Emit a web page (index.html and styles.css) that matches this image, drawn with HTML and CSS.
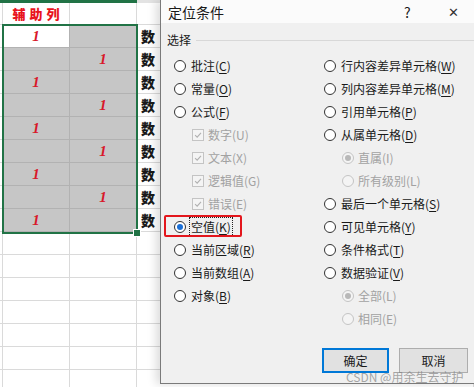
FILE: index.html
```html
<!DOCTYPE html>
<html lang="zh-CN">

<head>
  <meta charset="UTF-8">
  <title>定位条件</title>
  <link rel="stylesheet" href="styles.css">
</head>

<body>
  <div class="screen">
    <div class="colbar"><span class="colbar-sel"></span></div>

    <div class="sheet">
      <div class="c"></div><div class="c head">辅助列</div><div class="c"></div><div class="c"></div>

      <div class="c"></div><div class="c active"><i class="one">1</i></div><div class="c sel"></div><div class="c txt">数</div>
      <div class="c"></div><div class="c sel"></div><div class="c sel"><i class="one">1</i></div><div class="c txt">数</div>
      <div class="c"></div><div class="c sel"><i class="one">1</i></div><div class="c sel"></div><div class="c txt">数</div>
      <div class="c"></div><div class="c sel"></div><div class="c sel"><i class="one">1</i></div><div class="c txt">数</div>
      <div class="c"></div><div class="c sel"><i class="one">1</i></div><div class="c sel"></div><div class="c txt">数</div>
      <div class="c"></div><div class="c sel"></div><div class="c sel"><i class="one">1</i></div><div class="c txt">数</div>
      <div class="c"></div><div class="c sel"><i class="one">1</i></div><div class="c sel"></div><div class="c txt">数</div>
      <div class="c"></div><div class="c sel"></div><div class="c sel"><i class="one">1</i></div><div class="c txt">数</div>
      <div class="c"></div><div class="c sel"><i class="one">1</i></div><div class="c sel"></div><div class="c txt">数</div>

      <div class="c"></div><div class="c"></div><div class="c"></div><div class="c"></div>
      <div class="c"></div><div class="c"></div><div class="c"></div><div class="c"></div>
      <div class="c"></div><div class="c"></div><div class="c"></div><div class="c"></div>
      <div class="c"></div><div class="c"></div><div class="c"></div><div class="c"></div>
      <div class="c"></div><div class="c"></div><div class="c"></div><div class="c"></div>
      <div class="c"></div><div class="c"></div><div class="c"></div><div class="c"></div>
      <div class="c"></div><div class="c"></div><div class="c"></div><div class="c"></div>
    </div>

    <!-- selection frame over cells A2:B10 -->
    <div class="selection"><span class="handle"></span></div>

    <div class="dialog">
      <div class="titlebar">
        <span class="title">定位条件</span>
        <span class="help">?</span>
        <span class="close">✕</span>
      </div>

      <div class="group">
        <div class="legend"><span>选择</span></div>

        <div class="options">
          <label class="opt"><span class="radio"></span><span>批注(<u>C</u>)</span></label>
          <label class="opt"><span class="radio"></span><span>行内容差异单元格(<u>W</u>)</span></label>

          <label class="opt"><span class="radio"></span><span>常量(<u>O</u>)</span></label>
          <label class="opt"><span class="radio"></span><span>列内容差异单元格(<u>M</u>)</span></label>

          <label class="opt"><span class="radio"></span><span>公式(<u>F</u>)</span></label>
          <label class="opt"><span class="radio"></span><span>引用单元格(<u>P</u>)</span></label>

          <label class="opt sub off"><span class="check"><svg viewBox="0 0 12 12"><path d="M2.5 6.2 L5 8.6 L9.6 3.4" /></svg></span><span>数字(U)</span></label>
          <label class="opt"><span class="radio"></span><span>从属单元格(<u>D</u>)</span></label>

          <label class="opt sub off"><span class="check"><svg viewBox="0 0 12 12"><path d="M2.5 6.2 L5 8.6 L9.6 3.4" /></svg></span><span>文本(X)</span></label>
          <label class="opt sub off"><span class="radio on"></span><span>直属(I)</span></label>

          <label class="opt sub off"><span class="check"><svg viewBox="0 0 12 12"><path d="M2.5 6.2 L5 8.6 L9.6 3.4" /></svg></span><span>逻辑值(G)</span></label>
          <label class="opt sub off"><span class="radio"></span><span>所有级别(L)</span></label>

          <label class="opt sub off"><span class="check"><svg viewBox="0 0 12 12"><path d="M2.5 6.2 L5 8.6 L9.6 3.4" /></svg></span><span>错误(E)</span></label>
          <label class="opt"><span class="radio"></span><span>最后一个单元格(<u>S</u>)</span></label>

          <label class="opt"><span class="radio on"></span><span class="focus">空值(<u>K</u>)</span></label>
          <label class="opt"><span class="radio"></span><span>可见单元格(<u>Y</u>)</span></label>

          <label class="opt"><span class="radio"></span><span>当前区域(<u>R</u>)</span></label>
          <label class="opt"><span class="radio"></span><span>条件格式(<u>T</u>)</span></label>

          <label class="opt"><span class="radio"></span><span>当前数组(<u>A</u>)</span></label>
          <label class="opt"><span class="radio"></span><span>数据验证(<u>V</u>)</span></label>

          <label class="opt"><span class="radio"></span><span>对象(<u>B</u>)</span></label>
          <label class="opt sub off"><span class="radio on"></span><span>全部(L)</span></label>

          <span></span>
          <label class="opt sub off"><span class="radio"></span><span>相同(E)</span></label>
        </div>
      </div>

      <div class="actions">
        <button class="btn default">确定</button>
        <button class="btn">取消</button>
      </div>

      <!-- red mark drawn over the screenshot -->
      <div class="mark"></div>
      <div class="watermark">CSDN @用余生去守护</div>
    </div>
  </div>
</body>

</html>
```

FILE: styles.css
```css
body {
  margin: 0;
  background-color: #fff;
  font-family: "Noto Sans CJK SC", "Liberation Sans", sans-serif;
}

.screen {
  position: relative;
  width: 474px;
  height: 387px;
  overflow: hidden;
  background-color: #fff;
}

/* spreadsheet */
.colbar {
  display: flex;
  height: 3px;
  background-color: #e3e3e3;
}

.colbar-sel {
  width: 137px;
  background-color: #217346;
}

.sheet {
  display: grid;
  grid-template-columns: 3px 67px 67px 1fr;
  grid-template-rows: 22px;
  grid-auto-rows: 23px;
}

.c {
  box-sizing: border-box;
  border-right: 1px solid #dadada;
  border-bottom: 1px solid #dadada;
  display: flex;
  align-items: center;
  justify-content: center;
  overflow: hidden;
  white-space: nowrap;
}

.sel {
  background-color: #c6c6c6;
  border-color: #b2b2b2;
}

.active {
  background-color: #fff;
  border-color: #b2b2b2;
}

.head {
  color: #e8141c;
  font-size: 13px;
  font-weight: 900;
  letter-spacing: 4px;
  padding-left: 4px;
}

.one {
  color: #d8182a;
  font-family: "Liberation Serif", serif;
  font-size: 15px;
  font-weight: bold;
  font-style: italic;
}

.txt {
  justify-content: flex-start;
  padding-left: 4px;
  font-size: 14px;
  font-weight: 900;
  color: #1a1a1a;
}

.selection {
  position: absolute;
  left: 2px;
  top: 24px;
  width: 136px;
  height: 210px;
  box-sizing: border-box;
  border: 2px solid #217346;
}

.handle {
  position: absolute;
  right: -5px;
  bottom: -5px;
  width: 6px;
  height: 6px;
  background-color: #217346;
  border: 1px solid #fff;
}

/* dialog */
.dialog {
  position: absolute;
  left: 160px;
  top: 0;
  width: 320px;
  height: 384px;
  box-sizing: border-box;
  background-color: #f0f0f0;
  border-left: 1px solid #7a7a7a;
  border-bottom: 1px solid #7a7a7a;
  box-shadow: -4px 0 9px rgba(0, 0, 0, 0.14);
  color: #1a1a1a;
  font-size: 12px;
  line-height: 16px;
}

.titlebar {
  display: flex;
  align-items: center;
  height: 23px;
  padding-left: 7px;
  background-color: #fbfbfb;
}

.title {
  font-size: 14px;
  flex: 1;
}

.help {
  width: 44px;
  font-size: 14px;
}

.close {
  width: 32px;
  font-size: 13px;
  color: #333;
}

.group {
  padding: 10px 0 0 6px;
}

.legend {
  display: flex;
  align-items: center;
  height: 14px;
  line-height: 14px;
}

.legend::after {
  content: "";
  flex: 1;
  margin-left: 5px;
  border-top: 1px solid #d8d8d8;
}

.options {
  display: grid;
  grid-template-columns: 150px 1fr;
  grid-auto-rows: 23px;
  margin-top: 7px;
  padding-left: 7px;
}

.opt {
  display: flex;
  align-items: center;
  gap: 5px;
  white-space: nowrap;
}

.opt u {
  text-decoration-thickness: 1px;
  text-underline-offset: 2px;
}

.sub {
  padding-left: 18px;
  gap: 4px;
}

.off {
  color: #a2a2a2;
}

.radio {
  position: relative;
  flex: none;
  width: 12px;
  height: 12px;
  box-sizing: border-box;
  border: 1px solid #333;
  border-radius: 50%;
  background-color: #fff;
}

.radio.on::after {
  content: "";
  position: absolute;
  left: 2px;
  top: 2px;
  width: 6px;
  height: 6px;
  border-radius: 50%;
  background-color: #1a6fd6;
}

.off .radio {
  border-color: #c4c4c4;
  background-color: #f4f4f4;
}

.off .radio.on::after {
  background-color: #b8b8b8;
}

.check {
  flex: none;
  width: 12px;
  height: 12px;
  box-sizing: border-box;
  border: 1px solid #c4c4c4;
  background-color: #f4f4f4;
}

.check svg {
  display: block;
  width: 10px;
  height: 10px;
  fill: none;
  stroke: #b0b0b0;
  stroke-width: 1.3;
}

.focus {
  outline: 1px dotted #222;
  outline-offset: 1px;
}

.actions {
  display: flex;
  gap: 10px;
  margin-top: 18px;
  padding-left: 161px;
}

.btn {
  width: 67px;
  height: 25px;
  padding: 0;
  font-family: inherit;
  font-size: 12px;
  color: #1a1a1a;
  background-color: #e1e1e1;
  border: 1px solid #adadad;
}

.btn.default {
  border: 2px solid #0078d7;
}

.btn + .btn {
  width: 69px;
}

.mark {
  position: absolute;
  left: 3px;
  top: 215px;
  width: 78px;
  height: 22px;
  box-sizing: border-box;
  border: 2px solid #e3161c;
  border-radius: 2px;
}

.watermark {
  position: absolute;
  left: 185px;
  top: 370px;
  font-size: 12px;
  line-height: 14px;
  color: rgba(130, 130, 130, 0.7);
  white-space: nowrap;
}
```
